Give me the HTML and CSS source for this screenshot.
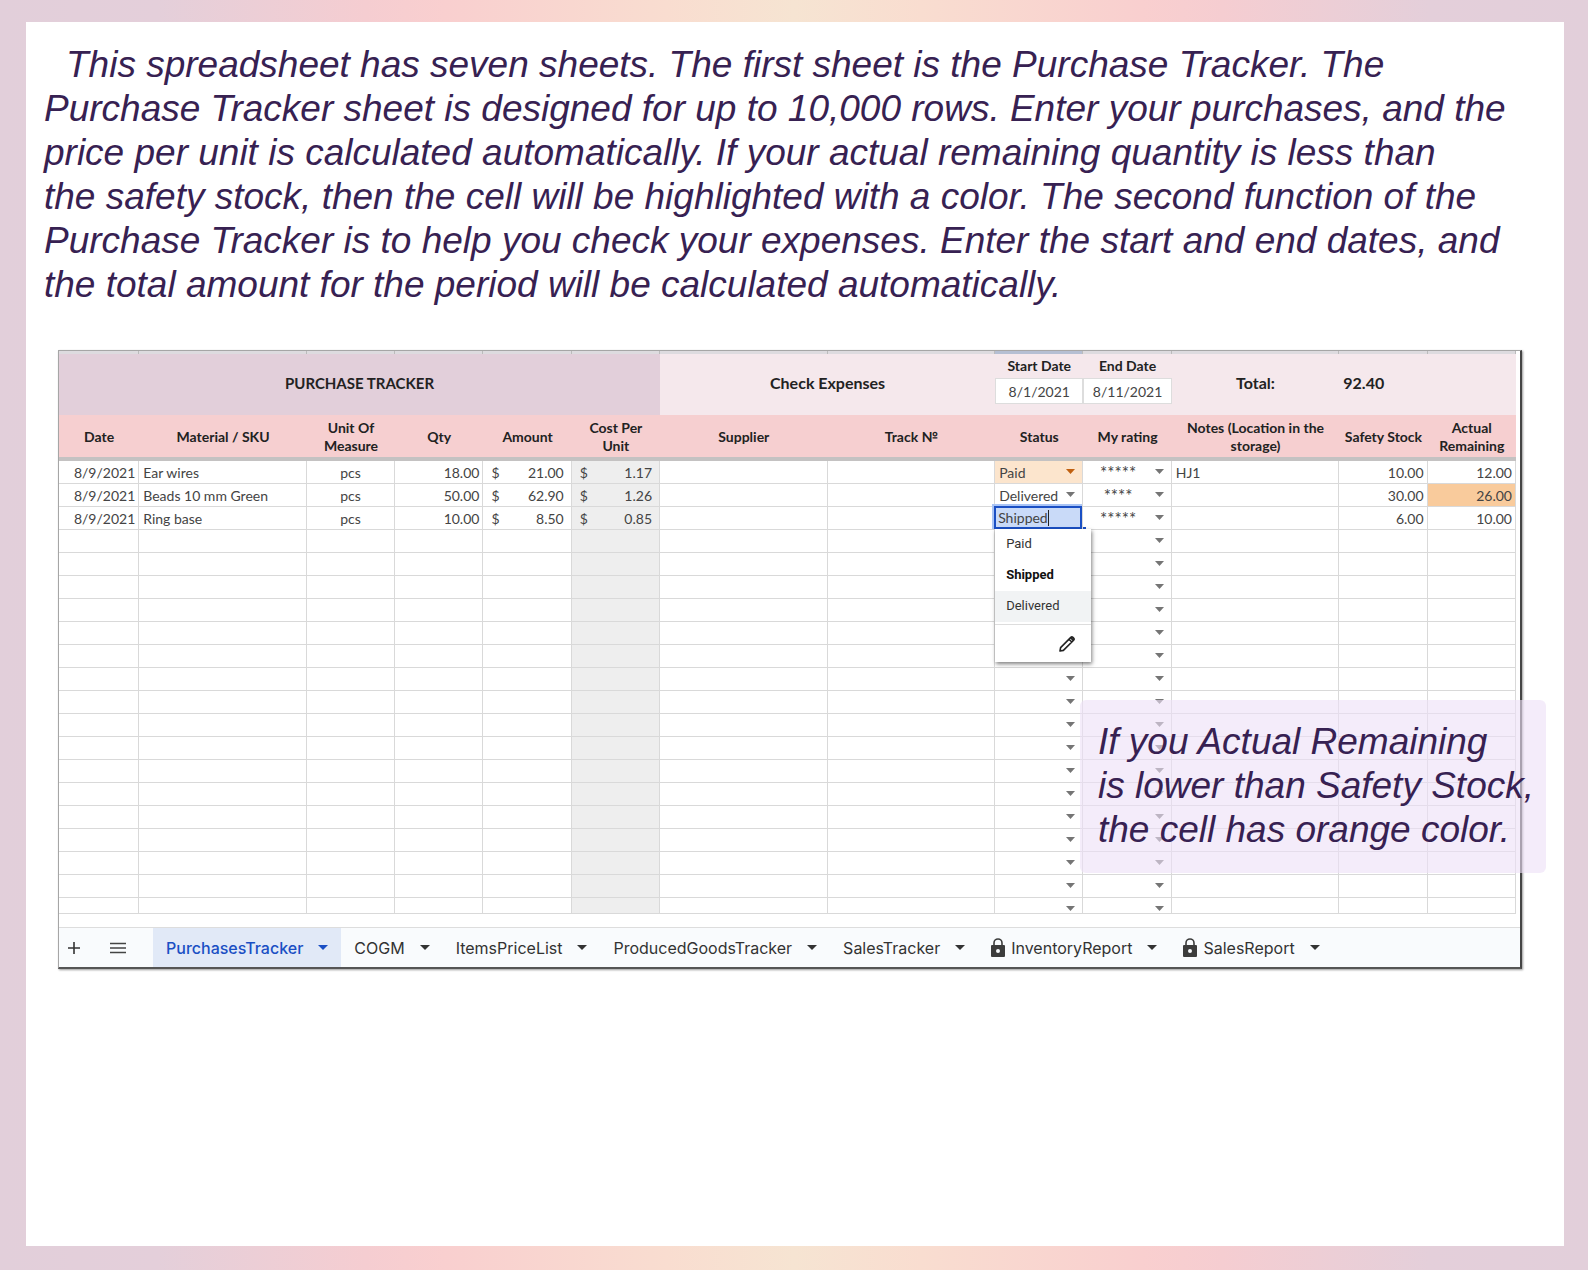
FILE: index.html
```html
<!DOCTYPE html>
<html lang="en">
<head>
    <meta charset="UTF-8">
    <meta name="viewport" content="width=device-width, initial-scale=1.0">
    <title>Purchase Tracker</title>
    <link rel="stylesheet" href="styles.css">
</head>
<body>
    <main class="panel">
        <p class="intro">
            This spreadsheet has seven sheets. The first sheet is the Purchase Tracker. The<br>
            Purchase Tracker sheet is designed for up to 10,000 rows. Enter your purchases, and the<br>
            price per unit is calculated automatically. If your actual remaining quantity is less than<br>
            the safety stock, then the cell will be highlighted with a color. The second function of the<br>
            Purchase Tracker is to help you check your expenses. Enter the start and end dates, and<br>
            the total amount for the period will be calculated automatically.
        </p>

        <section class="sheet">
            <table class="grid">
                <colgroup>
                    <col class="col-date"><col class="col-wide"><col class="col"><col class="col"><col class="col"><col class="col">
                    <col class="col-wide"><col class="col-wide"><col class="col"><col class="col"><col class="col-wide"><col class="col"><col class="col">
                </colgroup>
                <thead>
                    <tr class="strip">
                        <td></td><td></td><td></td><td></td><td></td><td></td><td></td><td></td><td class="strip-active"></td><td></td><td></td><td></td><td></td>
                    </tr>
                    <tr class="top-labels">
                        <th class="title" colspan="6" rowspan="3">PURCHASE TRACKER</th>
                        <th class="check" colspan="2" rowspan="3">Check Expenses</th>
                        <th><label for="startDate">Start Date</label></th>
                        <th><label for="endDate">End Date</label></th>
                        <th class="check" rowspan="3">Total:</th>
                        <th class="check total" colspan="2" rowspan="3">92.40</th>
                    </tr>
                    <tr class="top-dates">
                        <td><input type="text" id="startDate" value="8/1/2021"></td>
                        <td><input type="text" id="endDate" value="8/11/2021"></td>
                    </tr>
                    <tr class="top-gap"><td></td><td></td></tr>
                    <tr class="heads">
                        <th>Date</th>
                        <th>Material / SKU</th>
                        <th>Unit Of Measure</th>
                        <th>Qty</th>
                        <th>Amount</th>
                        <th>Cost Per Unit</th>
                        <th>Supplier</th>
                        <th>Track №</th>
                        <th>Status</th>
                        <th>My rating</th>
                        <th>Notes (Location in the storage)</th>
                        <th>Safety Stock</th>
                        <th>Actual Remaining</th>
                    </tr>
                </thead>
                <tbody id="rows"></tbody>
            </table>

            <nav class="tabs">
                <button class="tool" aria-label="Add sheet">
                    <svg width="12" height="12" viewBox="0 0 12 12"><path d="M6 0v12M0 6h12" stroke="#333" stroke-width="1.6"/></svg>
                </button>
                <button class="tool" aria-label="All sheets">
                    <svg width="16" height="12" viewBox="0 0 16 12"><path d="M0 1.500h16M0 6h16M0 10.500h16" stroke="#444" stroke-width="1.6"/></svg>
                </button>
                <button class="tab active">PurchasesTracker<i class="caret-down"></i></button>
                <button class="tab">COGM<i class="caret-down"></i></button>
                <button class="tab">ItemsPriceList<i class="caret-down"></i></button>
                <button class="tab">ProducedGoodsTracker<i class="caret-down"></i></button>
                <button class="tab">SalesTracker<i class="caret-down"></i></button>
                <button class="tab locked">
                    <svg class="lock" width="14" height="19" viewBox="0 0 14 19"><path d="M3 8V5a4 4 0 0 1 8 0v3" fill="none" stroke="#3c3c3c" stroke-width="1.6"/><path fill="#3c3c3c" fill-rule="evenodd" d="M1 7h12a1 1 0 0 1 1 1v10a1 1 0 0 1-1 1H1a1 1 0 0 1-1-1V8a1 1 0 0 1 1-1zM7 11a2 2 0 1 0 0 4 2 2 0 0 0 0-4z"/></svg>
                    InventoryReport<i class="caret-down"></i>
                </button>
                <button class="tab locked">
                    <svg class="lock" width="14" height="19" viewBox="0 0 14 19"><path d="M3 8V5a4 4 0 0 1 8 0v3" fill="none" stroke="#3c3c3c" stroke-width="1.6"/><path fill="#3c3c3c" fill-rule="evenodd" d="M1 7h12a1 1 0 0 1 1 1v10a1 1 0 0 1-1 1H1a1 1 0 0 1-1-1V8a1 1 0 0 1 1-1zM7 11a2 2 0 1 0 0 4 2 2 0 0 0 0-4z"/></svg>
                    SalesReport<i class="caret-down"></i>
                </button>
            </nav>

            <p class="callout">If you Actual Remaining<br>is lower than Safety Stock,<br>the cell has orange color.</p>
        </section>
    </main>

    <!-- status cell in edit mode with its open list -->
    <template id="editorTemplate">
        <div class="editor">
            <div class="editor-box">
                <input type="text" value="Shipped" aria-label="Status"><span class="cursor"></span>
            </div>
            <span class="handle"></span>
            <div class="menu">
                <button>Paid</button>
                <button class="chosen">Shipped</button>
                <button class="hover">Delivered</button>
                <div class="menu-foot">
                    <button class="edit" aria-label="Edit list">
                        <svg width="16" height="16" viewBox="0 0 16 16"><path d="M1 15l.6-3.400L11.800 1.400a1.500 1.500 0 0 1 2.100 0l.7.7a1.500 1.500 0 0 1 0 2.100L4.400 14.400zM10 3.200l2.800 2.800" fill="none" stroke="#222" stroke-width="1.6" stroke-linejoin="round"/><path d="M11 2.200l1.500-1.200 2.500 2.500-1.200 1.500z" fill="#222"/></svg>
                    </button>
                </div>
            </div>
        </div>
    </template>

    <script src="script.js"></script>
</body>
</html>
```

FILE: styles.css
```css
* {
    box-sizing: border-box;
}
body {
    margin: 0;
    min-height: 100vh;
    padding: 22px 24px 24px 26px;
    display: flex;
    background: linear-gradient(to right, #e2cfda 0%, #e4cfda 10%, #f5cdd1 23%, #f9cfcf 28%, #f9ddd0 42%, #f6e4d2 50%, #f9ddd0 58%, #f9cfcf 72%, #f5cdd1 77%, #e4cfda 90%, #e2cfda 100%);
    font-family: Lato, "Liberation Sans", sans-serif;
    color: #333;
}
.panel {
    flex: 1;
    min-width: 0;
    background: white;
    padding: 20px 42px 20px 32px;
}
.intro, .callout {
    margin: 0;
    font: italic 37px/44px "Liberation Sans", Arial, sans-serif;
    color: #372152;
    white-space: nowrap;
}
.intro {
    margin: 0 -26px 43px -14px;
    padding-top: 1px;
    text-indent: 22px;
}

/* spreadsheet */
.sheet {
    position: relative;
    background: white;
    border: 1px solid #a6a6a6;
    border-right: 2px solid #444;
    border-bottom: 2px solid #555;
    box-shadow: 1px 1px 2px #999;
}
.grid {
    width: calc(100% - 4px);
    table-layout: fixed;
    border-collapse: separate;
    border-spacing: 0;
    font-size: 14px;
    line-height: 18px;
}
.col-date {
    width: 80px;
}
.col-wide {
    width: 167px;
}
.col {
    width: 88px;
}
td, th {
    padding: 0;
}
.strip td {
    height: 3px;
    background: #dddbdf;
    border-right: 1px solid #bbb;
}
.strip .strip-active {
    background: #b5bfd3;
}
.top-labels th, .top-dates td, .top-gap td {
    background: #f5e8ec;
}
.top-labels th {
    height: 24px;
    color: #222;
}
.top-labels .title, .top-labels .check {
    padding-bottom: 4px;
    font-size: 16px;
}
.top-labels .title {
    background: #e2cfda;
    font-size: 15px;
}
.top-labels .total {
    text-align: left;
    padding-left: 4px;
}
.top-dates input {
    display: block;
    width: 100%;
    height: 26px;
    padding: 0;
    border: 1px solid #ddd;
    background: white;
    font: 14px Lato, sans-serif;
    color: #444;
    text-align: center;
}
.top-gap td {
    height: 11px;
}
.heads th {
    height: 46px;
    padding: 2px 4px 0;
    background: #f6cfd0;
    border-bottom: 4px solid #c4c2c2;
    color: #222;
}
#rows td {
    height: 23px;
    padding-top: 0;
    border-right: 1px solid #d9d9d9;
    border-bottom: 1px solid #d9d9d9;
    color: #444;
    white-space: nowrap;
}
#rows .cut td {
    height: 16px;
}
#rows .left {
    padding: 2px 0 0 4px;
}
#rows .center {
    padding-top: 2px;
    text-align: center;
}
#rows .right {
    padding: 2px 3px 0 0;
    text-align: right;
}
#rows .cut .left, #rows .cut .center, #rows .cut .right {
    padding: 0;
}
#rows .cost {
    background: #eee;
}
#rows .low {
    background: #f9cb9c;
}
.money {
    display: flex;
    justify-content: space-between;
    padding: 2px 7px 0 8px;
}
select {
    display: block;
    width: 100%;
    height: 22px;
    padding: 0 22px 0 4px;
    border: none;
    appearance: none;
    background: url("data:image/svg+xml,%3Csvg xmlns='http://www.w3.org/2000/svg' width='9' height='5'%3E%3Cpath d='M0 0h9L4.5 5z' fill='%23757575'/%3E%3C/svg%3E") no-repeat right 7px top 8px;
    font: 14px Lato, sans-serif;
    color: #444;
}
.cut select {
    height: 15px;
}
select.paid {
    background-color: #fce5cd;
    background-image: url("data:image/svg+xml,%3Csvg xmlns='http://www.w3.org/2000/svg' width='9' height='5'%3E%3Cpath d='M0 0h9L4.5 5z' fill='%23c06010'/%3E%3C/svg%3E");
}
select.rating {
    text-align-last: center;
    font-size: 17px;
}

/* opened status cell */
.editor {
    position: relative;
    height: 22px;
}
.editor-box {
    position: absolute;
    inset: -1px 0 0 -1px;
    display: flex;
    align-items: center;
    padding-left: 2px;
    border: 2px solid #1a4fc4;
    box-shadow: -1px -1px 0 1px #a9c4f5;
    background: #c9daf8;
}
.editor-box input {
    field-sizing: content;
    padding: 0;
    border: none;
    background: none;
    font: 14px Lato, sans-serif;
    color: #444;
}
.cursor {
    width: 1px;
    height: 16px;
    background: #222;
}
.handle {
    position: absolute;
    right: -4px;
    bottom: -1px;
    width: 3px;
    height: 3px;
    background: #1a4fc4;
}
.menu {
    position: absolute;
    z-index: 2;
    top: 22px;
    left: 0;
    width: 96px;
    background: white;
    box-shadow: 1px 2px 4px rgba(0, 0, 0, 0.5);
}
.menu button {
    display: block;
    width: 100%;
    height: 31px;
    padding: 0 11px 2px;
    border: none;
    background: white;
    font: 13px Roboto, sans-serif;
    color: #333;
    text-align: left;
}
.menu .chosen {
    font-weight: bold;
    color: #111;
}
.menu .hover {
    background: #f1f3f4;
}
.menu-foot {
    margin-top: 2px;
    padding: 2px 4px 2px 60px;
    border-top: 1px solid #ddd;
}
.menu .edit {
    height: 33px;
    padding: 0 4px;
}
.edit svg {
    display: block;
}

/* sheet tabs */
.tabs {
    display: flex;
    align-items: center;
    height: 40px;
    margin-top: 13px;
    padding-left: 9px;
    border-top: 1px solid #ddd;
    background: #f9fbfd;
}
.tool, .tab {
    padding: 0;
    border: none;
    background: none;
    font: 500 16px Inter, sans-serif;
    color: #333;
}
.tool {
    display: flex;
    width: 16px;
    margin-right: 26px;
}
.tool + .tool {
    margin-right: 27px;
}
.tab {
    display: flex;
    align-items: center;
    height: 39px;
    padding: 0 13px;
    font-weight: normal;
}
.tab.active {
    background: #e1e9f7;
    color: #1a4fc4;
    font-weight: 500;
}
.lock {
    margin-right: 6px;
}
.caret-down {
    margin-left: 15px;
    border: 5px solid transparent;
    border-top-color: currentColor;
    border-bottom: none;
}

.callout {
    position: absolute;
    z-index: 1;
    top: 349px;
    right: -26px;
    padding: 20px 12px 21px 18px;
    border-radius: 6px;
    background: rgba(237, 223, 247, 0.6);
}
```

FILE: script.js
```js
const EMPTY_ROWS = 17;

const purchases = [
    { date: '8/9/2021', item: 'Ear wires', unit: 'pcs', qty: '18.00', amount: '21.00', cost: '1.17', status: 'Paid', rating: '*****', notes: 'HJ1', safety: '10.00', actual: '12.00' },
    { date: '8/9/2021', item: 'Beads 10 mm Green', unit: 'pcs', qty: '50.00', amount: '62.90', cost: '1.26', status: 'Delivered', rating: '****', notes: '', safety: '30.00', actual: '26.00' },
    { date: '8/9/2021', item: 'Ring base', unit: 'pcs', qty: '10.00', amount: '8.50', cost: '0.85', status: 'Shipped', editing: true, rating: '*****', notes: '', safety: '6.00', actual: '10.00' }
];

const money = (value) => value ? `<div class="money"><span>$</span><span>${value}</span></div>` : '';

const select = (label, value = '', cls = '') =>
    `<select class="${cls}" aria-label="${label}"><option>${value}</option></select>`;

function rowHtml(p) {
    const low = parseFloat(p.actual) < parseFloat(p.safety) ? 'low' : '';
    const status = p.editing
        ? document.getElementById('editorTemplate').innerHTML
        : select('Status', p.status, p.status === 'Paid' ? 'paid' : '');
    return `
        <td class="right">${p.date || ''}</td>
        <td class="left">${p.item || ''}</td>
        <td class="center">${p.unit || ''}</td>
        <td class="right">${p.qty || ''}</td>
        <td>${money(p.amount)}</td>
        <td class="cost">${money(p.cost)}</td>
        <td></td>
        <td></td>
        <td>${status}</td>
        <td>${select('My rating', p.rating, 'rating')}</td>
        <td class="left">${p.notes || ''}</td>
        <td class="right">${p.safety || ''}</td>
        <td class="right ${low}">${p.actual || ''}</td>`;
}

const body = document.getElementById('rows');
for (let i = 0; i < purchases.length + EMPTY_ROWS; i++) {
    const tr = document.createElement('tr');
    tr.innerHTML = rowHtml(purchases[i] || {});
    body.appendChild(tr);
}
// the last row is cut off by the tab bar
body.lastElementChild.className = 'cut';
```
